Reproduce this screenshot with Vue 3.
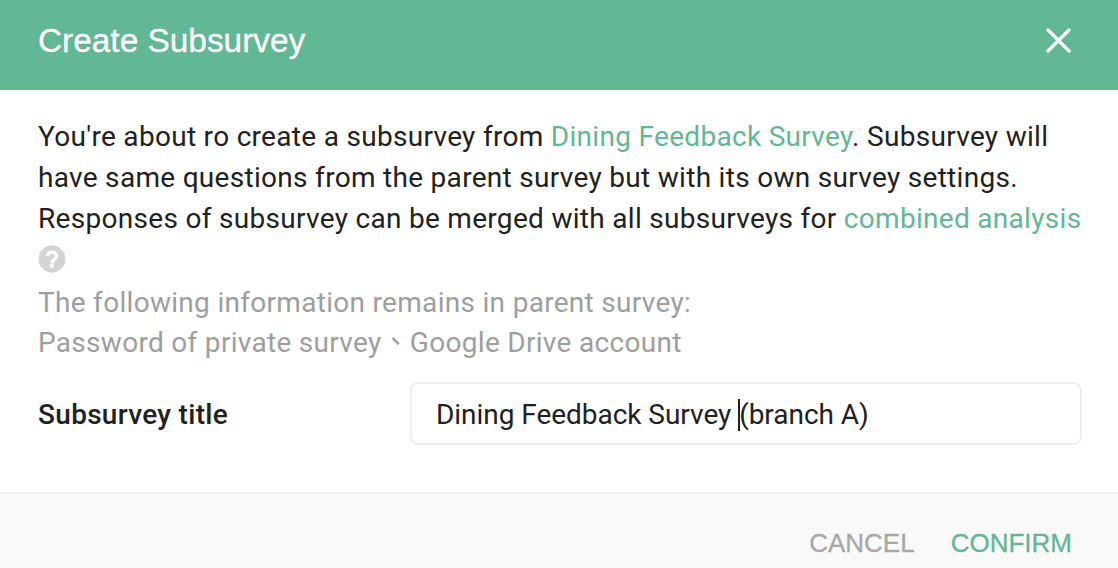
<script setup>
const parentTitle = 'Dining Feedback Survey'
</script>

<template>
  <div class="dialog">
    <header class="dialog-header">
      <h2>Create Subsurvey</h2>
      <button class="close-btn" aria-label="Close">
        <svg width="25" height="25" viewBox="0 0 25 25">
          <path d="M2 2 L23 23 M23 2 L2 23" stroke="#fff" stroke-width="3.4" stroke-linecap="round" />
        </svg>
      </button>
    </header>

    <div class="dialog-body">
      <p class="intro">
        You're about ro create a subsurvey from <a>{{ parentTitle }}</a>. Subsurvey will have same questions from the parent survey but with its own survey settings. Responses of subsurvey can be merged with all subsurveys for <a>combined analysis</a>
        <svg class="help" width="28" height="28" viewBox="0 0 28 28">
          <circle cx="14" cy="14" r="13.5" fill="#d4d4d4" />
          <path d="M9.6 11.2 C9.8 8.6 11.6 7.3 14 7.3 C16.6 7.3 18.5 8.8 18.5 11 C18.5 12.9 17.2 13.7 16 14.5 C15.2 15.1 14.8 15.5 14.8 16.6 L12.7 16.6" fill="none" stroke="#fff" stroke-width="3.4" />
          <circle cx="13.8" cy="20.8" r="2.2" fill="#fff" />
        </svg>
      </p>
      <p class="note">
        The following information remains in parent survey:<br />
        Password of private survey、Google Drive account
      </p>
      <div class="form-row">
        <label>Subsurvey title</label>
        <div class="input">Dining Feedback Survey <span class="caret"></span>(branch A)</div>
      </div>
    </div>

    <footer class="dialog-footer">
      <button class="action cancel">CANCEL</button>
      <button class="action confirm">CONFIRM</button>
    </footer>
  </div>
</template>

<style scoped>
.dialog {
  width: 1118px;
  height: 568px;
  overflow: hidden;
  background: #fff;
  font-family: Roboto, "Noto Sans CJK TC", sans-serif;
  color: #212121;
}

.dialog-header {
  height: 90px;
  box-sizing: border-box;
  display: flex;
  align-items: center;
  justify-content: space-between;
  padding: 0 47px 0 38px;
  background: #62b794;
}

.dialog-header h2 {
  margin: 0 0 8px;
  font-family: "Liberation Sans", sans-serif;
  font-size: 33.4px;
  font-weight: 400;
  color: #fff;
  -webkit-text-stroke: 0.3px #fff;
}

.close-btn {
  display: flex;
  padding: 0;
  border: none;
  background: none;
  margin-bottom: 10px;
}

.dialog-body {
  height: 402px;
  box-sizing: border-box;
  padding: 26px 36px 0 38px;
}

.intro {
  margin: 0;
  font-size: 28px;
  line-height: 41px;
  letter-spacing: 0.3px;
}

.intro a {
  color: #62b794;
}

.help {
  display: block;
  margin-top: 6px;
}

.note {
  margin: 10px 0 0;
  font-size: 28px;
  line-height: 40px;
  letter-spacing: 0.3px;
  color: #9e9e9e;
}

.form-row {
  display: flex;
  align-items: center;
  margin-top: 19px;
}

.form-row label {
  width: 372px;
  padding-top: 2px;
  font-size: 28px;
  font-weight: 500;
  letter-spacing: 0.3px;
}

.input {
  flex: 1;
  height: 63px;
  box-sizing: border-box;
  display: flex;
  align-items: center;
  white-space: pre;
  padding: 2px 24px 0;
  border: 2px solid #eee;
  border-radius: 8px;
  font-size: 28px;
  letter-spacing: -0.04px;
}

.caret {
  width: 2px;
  height: 32px;
  margin-right: -1px;
  background: #212121;
}

.dialog-footer {
  height: 76px;
  box-sizing: border-box;
  display: flex;
  justify-content: flex-end;
  align-items: center;
  gap: 36px;
  padding: 25px 46px 0 0;
  border-top: 2px solid #eee;
  background: #f9f9f9;
}

.action {
  padding: 0;
  border: none;
  background: none;
  font-family: "Liberation Sans", sans-serif;
  font-size: 26px;
  -webkit-text-stroke: 0.3px currentColor;
}

.cancel {
  color: #a8a8a8;
}

.confirm {
  color: #62b794;
}
</style>
